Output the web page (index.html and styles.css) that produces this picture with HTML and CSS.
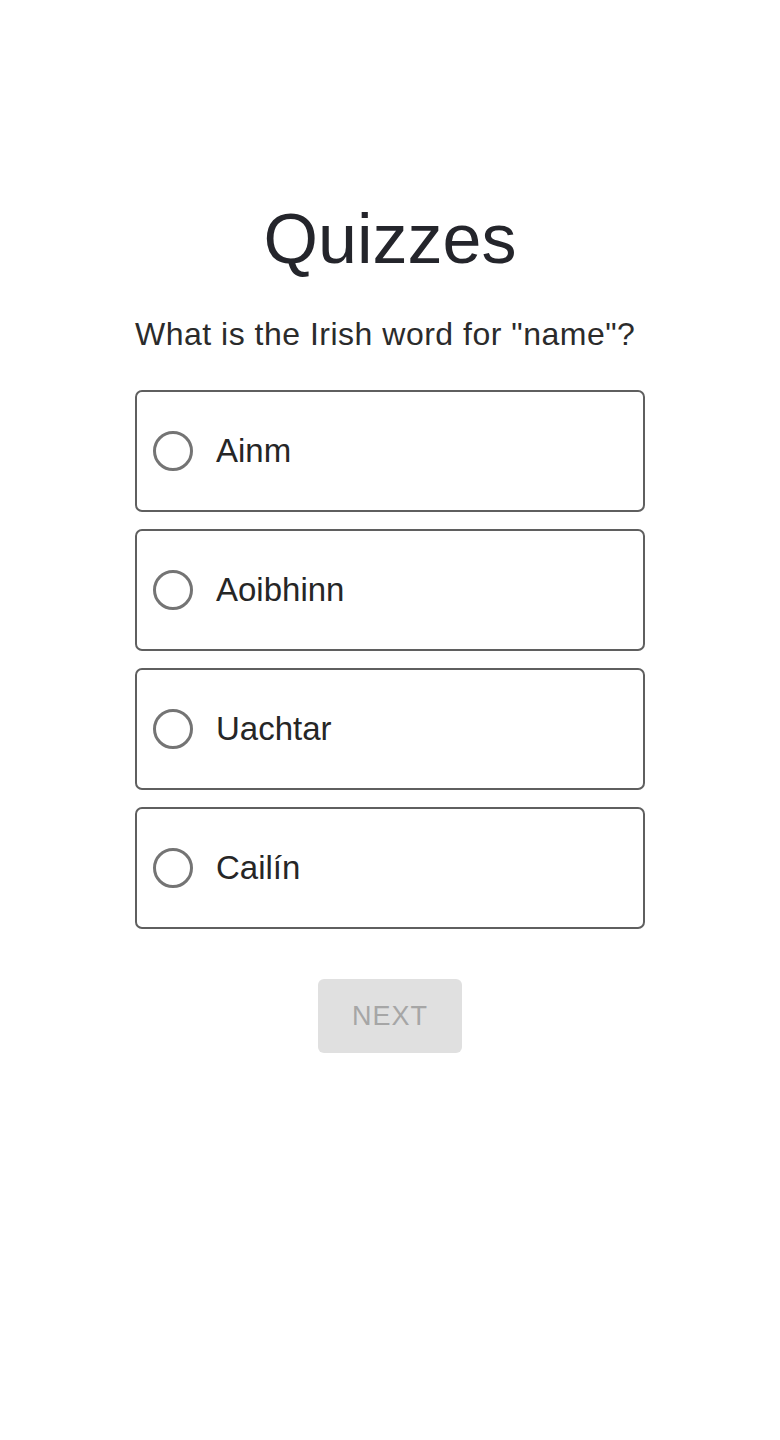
FILE: index.html
```html
<!DOCTYPE html>
<html lang="en">
<head>
  <meta charset="UTF-8">
  <meta name="viewport" content="width=device-width, initial-scale=1.0">
  <title>Quizzes</title>
  <link rel="stylesheet" href="styles.css">
</head>
<body>

  <div class="quiz">
    <h1 class="quiz-title">Quizzes</h1>
    <p class="question">What is the Irish word for "name"?</p>

    <div class="options">
      <label class="option"><span class="radio"></span><span class="option-text">Ainm</span></label>
      <label class="option"><span class="radio"></span><span class="option-text">Aoibhinn</span></label>
      <label class="option"><span class="radio"></span><span class="option-text">Uachtar</span></label>
      <label class="option"><span class="radio"></span><span class="option-text">Cailín</span></label>
    </div>

    <button class="next-button" disabled>NEXT</button>
  </div>

</body>
</html>
```

FILE: styles.css
```css
body {
  margin: 0;
  padding: 0;
  background-color: #fff;
  font-family: "Liberation Sans", Arial, sans-serif;
  color: #222;
}

.quiz {
  width: 510px;
  margin: 0 auto;
  padding-top: 199px;
  display: flex;
  flex-direction: column;
  align-items: center;
}

.quiz-title {
  margin: 0;
  font-size: 70px;
  font-weight: normal;
  line-height: 80px;
  color: #24252b;
}

.question {
  align-self: stretch;
  margin: 35px 0 0 0;
  font-size: 32px;
  line-height: 40px;
  letter-spacing: 0.5px;
  color: #2b2b2b;
}

.options {
  align-self: stretch;
  margin-top: 36px;
  display: flex;
  flex-direction: column;
  gap: 17px;
}

.option {
  height: 118px;
  border: 2px solid #5f5f5f;
  border-radius: 7px;
  display: flex;
  align-items: center;
  padding-left: 16px;
  cursor: pointer;
}

.radio {
  width: 34px;
  height: 34px;
  border: 3px solid #747474;
  border-radius: 50%;
  flex-shrink: 0;
}

.option-text {
  margin-left: 23px;
  font-size: 33px;
  color: #262626;
}

.next-button {
  margin-top: 50px;
  width: 144px;
  height: 74px;
  border: none;
  border-radius: 6px;
  background-color: #e0e0e0;
  color: #a6a6a6;
  font-family: "Liberation Sans", Arial, sans-serif;
  font-size: 27px;
  letter-spacing: 1px;
}
```
